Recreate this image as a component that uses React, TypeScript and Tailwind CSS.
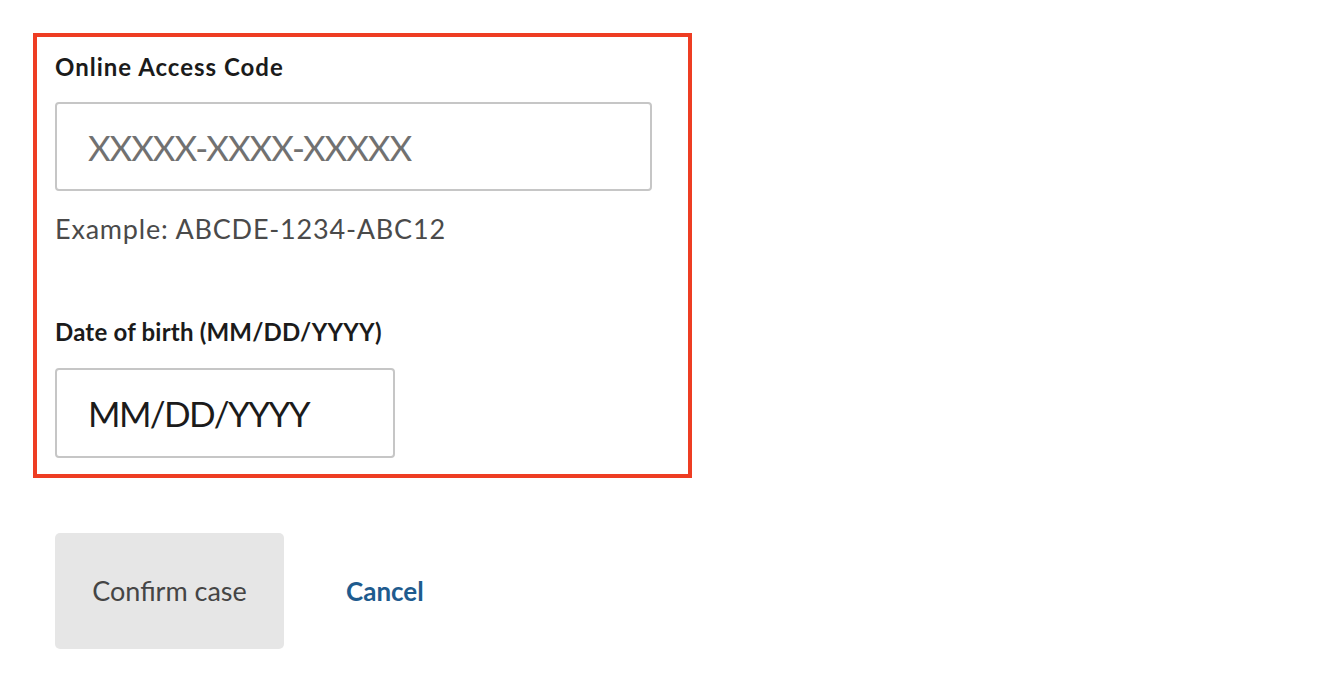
import { useState } from "react";

export default function App() {
  const [code, setCode] = useState("");
  const [dob, setDob] = useState("MM/DD/YYYY");

  return (
    <div className="min-h-screen bg-white pl-[33px] pt-[33px] font-['Lato',sans-serif]">
      <div className="w-[659px] border-4 border-[#ee3d23] pl-[18px] pr-[36px] pt-[16px] pb-[16px]">
        <label className="block h-[28px] text-[24px] font-bold leading-[28px] tracking-[1px] text-[#1b1b1b]">
          Online Access Code
        </label>
        <input
          value={code}
          onChange={(e) => setCode(e.target.value)}
          placeholder="XXXXX-XXXX-XXXXX"
          className="mt-[21px] block h-[89px] w-[597px] rounded-[4px] border-2 border-[#c6c6c6] px-[31px] text-[35px] tracking-[-1.1px] text-[#1b1b1b] outline-none placeholder:text-[#717171]"
        />
        <p className="mt-[24px] h-[28px] text-[27px] leading-[28px] tracking-[0.8px] text-[#4a4a4a]">
          Example: ABCDE-1234-ABC12
        </p>
        <label className="mt-[75px] block h-[28px] text-[24px] font-bold leading-[28px] tracking-[0.2px] text-[#1b1b1b]">
          Date of birth (MM/DD/YYYY)
        </label>
        <input
          value={dob}
          onChange={(e) => setDob(e.target.value)}
          className="mt-[22px] block h-[90px] w-[340px] rounded-[4px] border-2 border-[#c6c6c6] px-[31px] text-[35px] tracking-[-1.6px] text-[#1b1b1b] outline-none"
        />
      </div>

      <div className="ml-[22px] mt-[55px] flex items-center gap-[62px]">
        <button className="h-[116px] w-[229px] rounded-[5px] bg-[#e6e6e6] text-[27px] text-[#454545]">
          Confirm case
        </button>
        <button className="text-[26px] font-bold text-[#1e5b8e]">Cancel</button>
      </div>
    </div>
  );
}
